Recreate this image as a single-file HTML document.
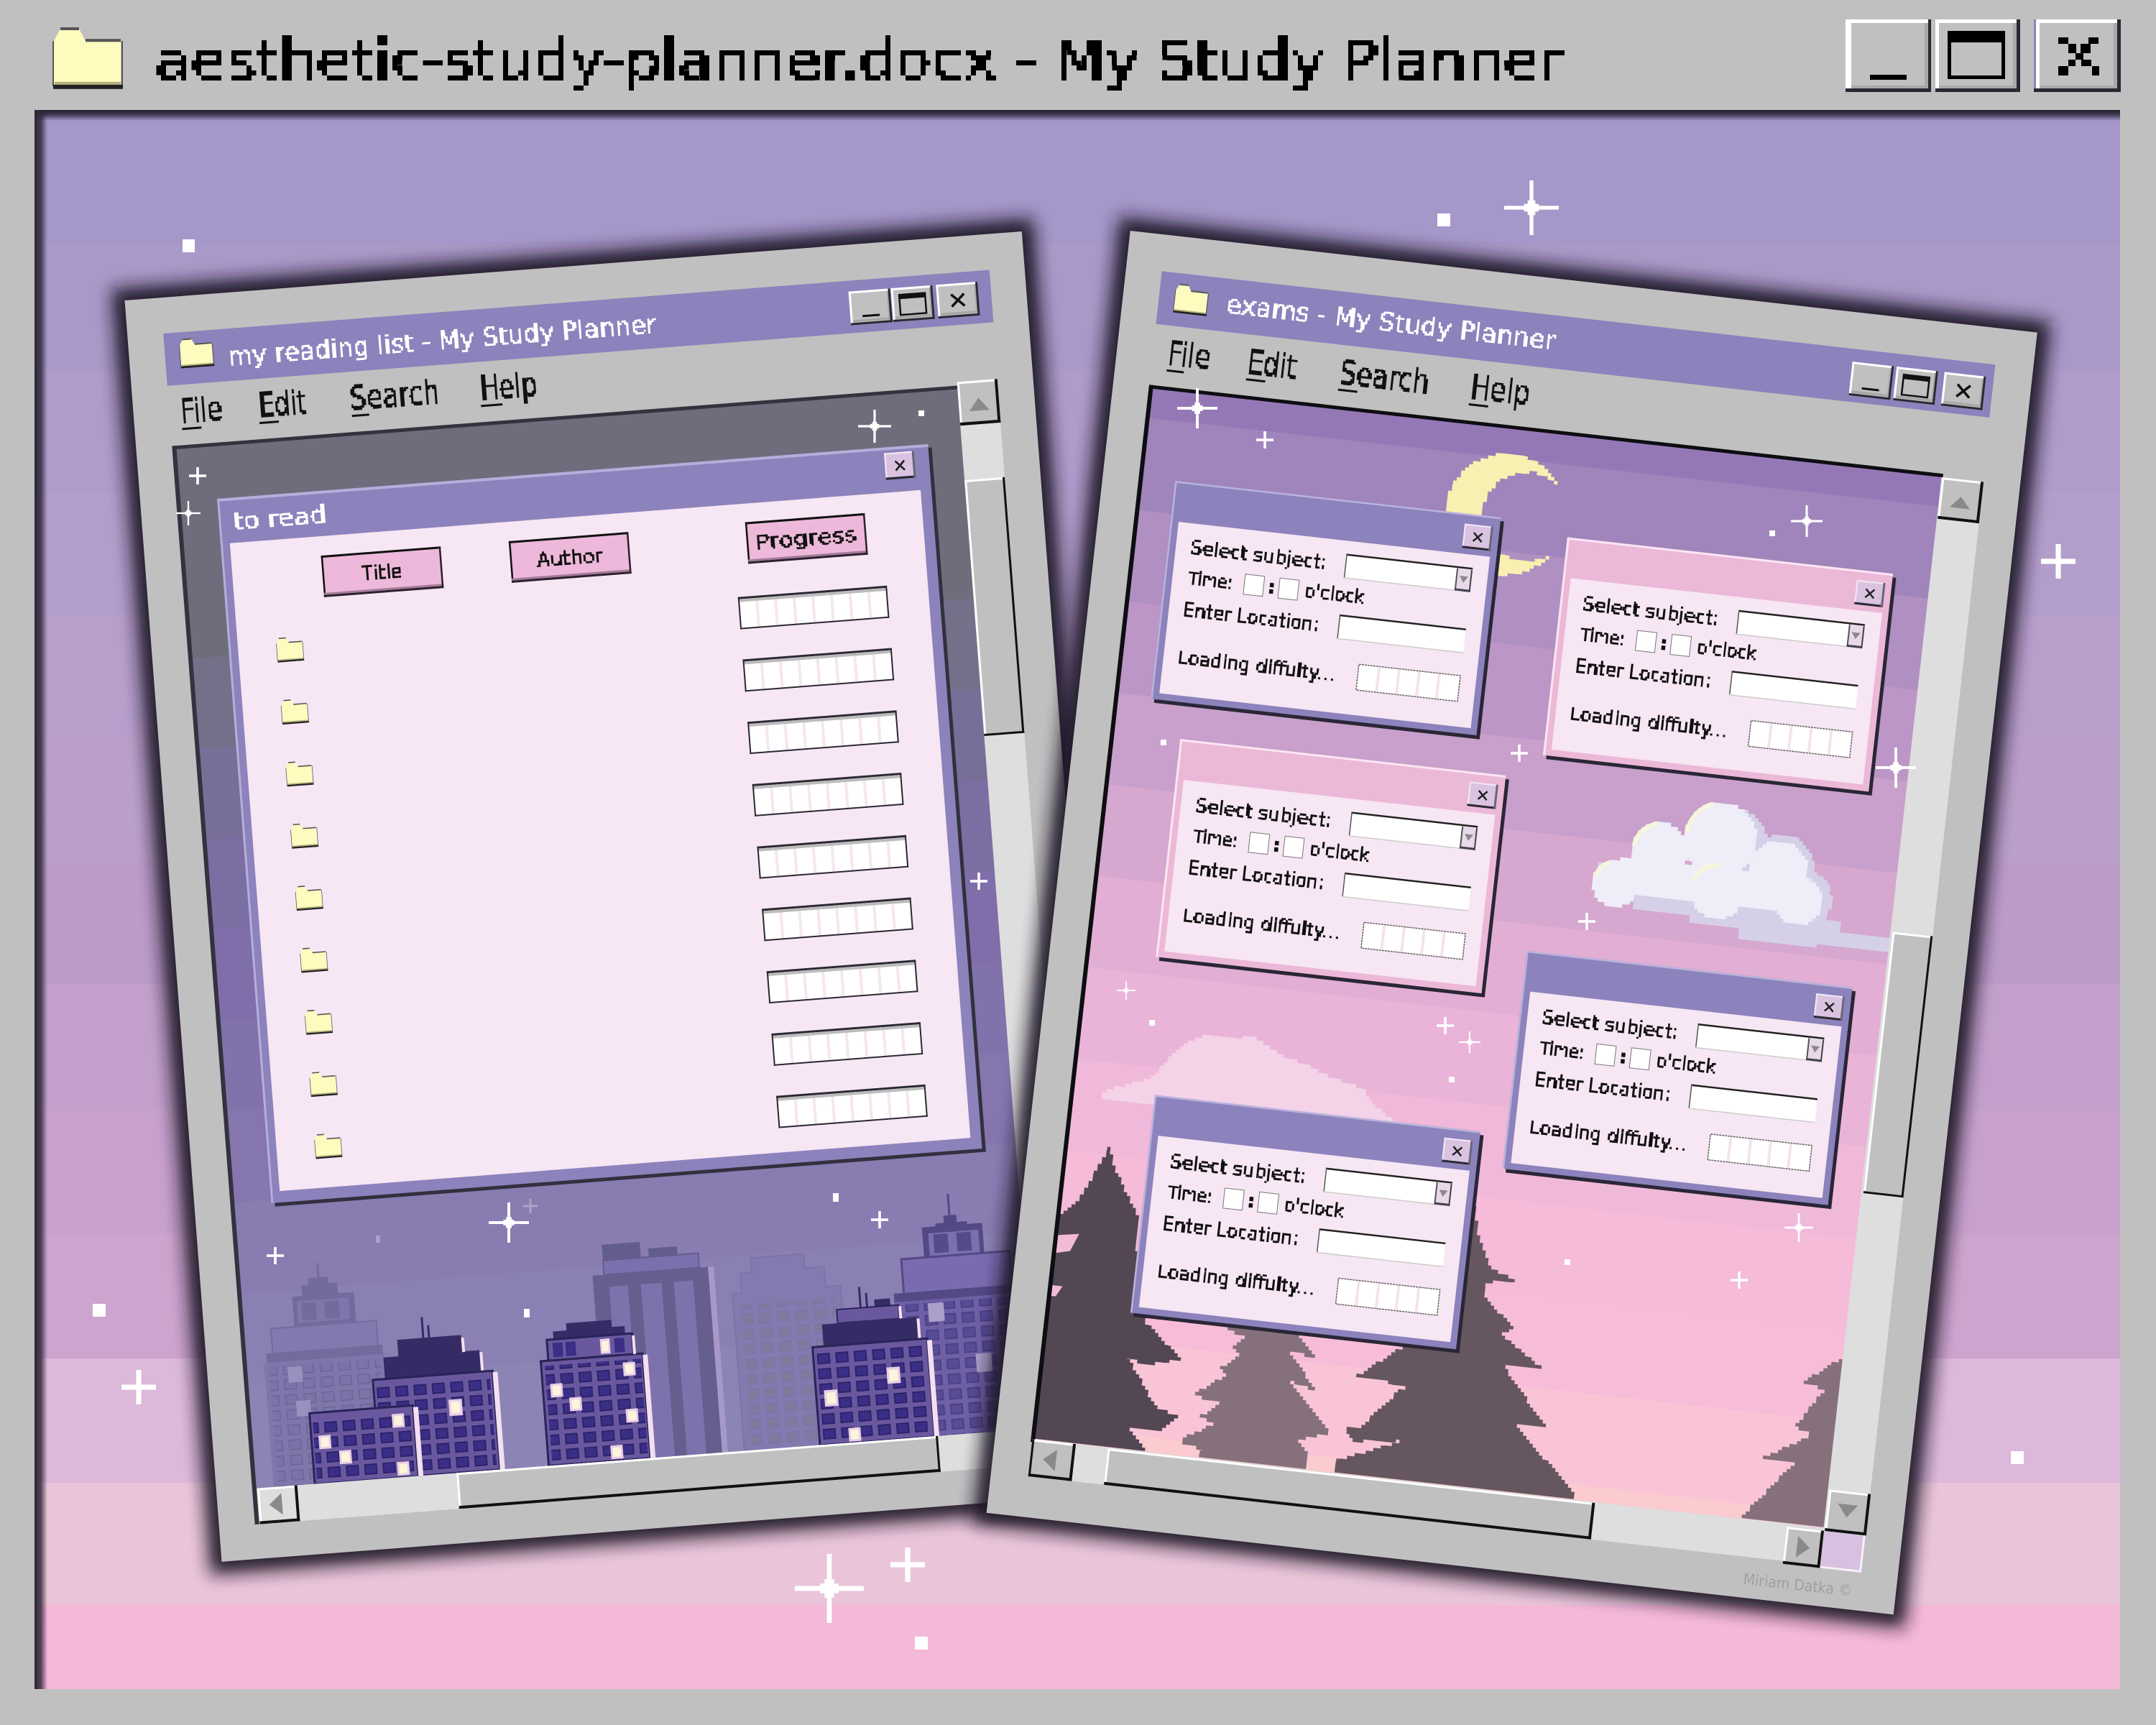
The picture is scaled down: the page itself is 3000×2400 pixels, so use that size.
<!DOCTYPE html>
<html lang="en"><head><meta charset="utf-8"><title>aesthetic-study-planner.docx - My Study Planner</title>
<style>html,body{margin:0;padding:0;background:#c0c0c0}svg{display:block}text{font-family:"DejaVu Sans","Liberation Sans",sans-serif}</style></head>
<body>
<svg xmlns="http://www.w3.org/2000/svg" width="3000" height="2400" viewBox="0 0 3000 2400">
<defs>
<filter id="sh" x="-10%" y="-10%" width="120%" height="120%"><feGaussianBlur stdDeviation="12"/></filter>
<filter id="pt" filterUnits="userSpaceOnUse" x="0" y="0" width="2300" height="150" color-interpolation-filters="sRGB"><feFlood x="3" y="3" width="1" height="1"/><feComposite width="7" height="7"/><feTile result="a"/><feComposite in="SourceGraphic" in2="a" operator="in"/><feComponentTransfer><feFuncA type="discrete" tableValues="0 1"/></feComponentTransfer><feMorphology operator="dilate" radius="3"/></filter>
<filter id="p3" filterUnits="userSpaceOnUse" x="0" y="0" width="1300" height="1800" color-interpolation-filters="sRGB"><feFlood x="1" y="1" width="1" height="1"/><feComposite width="3" height="3"/><feTile result="a"/><feComposite in="SourceGraphic" in2="a" operator="in"/><feComponentTransfer><feFuncA type="discrete" tableValues="0 1"/></feComponentTransfer><feMorphology operator="dilate" radius="1"/></filter>
<filter id="d3" filterUnits="userSpaceOnUse" x="0" y="0" width="470" height="320" color-interpolation-filters="sRGB"><feFlood x="1" y="1" width="1" height="1"/><feComposite width="3" height="3"/><feTile result="a"/><feComposite in="SourceGraphic" in2="a" operator="in"/><feComponentTransfer><feFuncA type="discrete" tableValues="0 1"/></feComponentTransfer><feMorphology operator="dilate" radius="1"/></filter>
<filter id="p5" filterUnits="userSpaceOnUse" x="0" y="0" width="1300" height="1800" color-interpolation-filters="sRGB"><feFlood x="2" y="2" width="1" height="1"/><feComposite width="5" height="5"/><feTile result="a"/><feComposite in="SourceGraphic" in2="a" operator="in"/><feComponentTransfer><feFuncA type="discrete" tableValues="0 1"/></feComponentTransfer><feMorphology operator="dilate" radius="2"/></filter>
<linearGradient id="gt" x1="0" y1="0" x2="0" y2="1"><stop offset="0" stop-color="#231e2e"/><stop offset=".45" stop-color="#231e2e" stop-opacity=".75"/><stop offset="1" stop-color="#231e2e" stop-opacity="0"/></linearGradient>
<linearGradient id="gl" x1="0" y1="0" x2="1" y2="0"><stop offset="0" stop-color="#2c2636"/><stop offset=".5" stop-color="#2c2636" stop-opacity=".8"/><stop offset="1" stop-color="#2c2636" stop-opacity="0"/></linearGradient>
<g id="S"><rect x="-1" y="-.07" width="2" height=".14" fill="#fff"/><rect x="-.07" y="-1" width=".14" height="2" fill="#fff"/><rect x="-.27" y="-.14" width=".54" height=".28" fill="#fff"/><rect x="-.14" y="-.27" width=".28" height=".54" fill="#fff"/></g>
<g id="P"><rect x="-1" y="-.15" width="2" height=".3" fill="#fff"/><rect x="-.15" y="-1" width=".3" height="2" fill="#fff"/></g>
<g id="F"><path d="M3 18 L12 1 H38 L47 18 H96 V78 H3Z" fill="#fdfbbd"/><path d="M12 1H38M47 17H96" stroke="#555" stroke-width="4" fill="none"/><path d="M2 18V80M98 18V80" stroke="#555" stroke-width="2"/><rect x="2" y="78" width="97" height="6" fill="#222"/><rect x="4" y="74" width="92" height="4" fill="#b5b27c"/></g>
<g id="wb"><rect width="58" height="47" fill="#c0c0c0"/><path d="M3 40H53V3h2V43H3Z" fill="#a6a6a6"/><rect width="58" height="3" fill="#fff"/><rect width="3" height="47" fill="#fff"/><rect y="44" width="58" height="3" fill="#2a2833"/><rect x="55" width="3" height="47" fill="#2a2833"/></g>
<g id="wbi"><use href="#wb"/><rect x="17" y="34" width="24" height="3" fill="#111"/></g>
<g id="wba"><use href="#wb"/><rect x="11" y="10" width="36" height="28" fill="none" stroke="#111" stroke-width="2.500"/><rect x="10" y="9" width="38" height="7" fill="#111"/></g>
<g id="wbx"><use href="#wb"/><path d="M20 15 L38 32M38 15 L20 32" stroke="#111" stroke-width="3.500"/></g>
<g id="sb"><rect width="58" height="58" fill="#c0c0c0"/><rect width="58" height="3" fill="#fff"/><rect width="3" height="58" fill="#fff"/><rect y="54" width="58" height="4" fill="#111"/><rect x="54" width="4" height="58" fill="#111"/></g>
<g id="xb"><rect width="40" height="34" fill="#d9c3e0"/><rect width="40" height="2" fill="#f3e8f5"/><rect width="2" height="34" fill="#f3e8f5"/><rect y="31" width="40" height="3" fill="#2a2833"/><rect x="37" width="3" height="34" fill="#6a6478"/><path d="M14 11 L26 23M26 11 L14 23" stroke="#222" stroke-width="2.500"/></g>
<g id="pb"><rect width="208" height="45" fill="#fff"/><path d="M26 3V44M52 3V44M78 3V44M104 3V44M130 3V44M156 3V44M182 3V44" stroke="#f5e6f2" stroke-width="4"/><rect width="208" height="3" fill="#2a2833"/><rect y="3" width="208" height="4" fill="#bbb"/><rect width="2" height="45" fill="#2a2833"/><rect x="206" width="2" height="45" fill="#2a2833"/><rect y="43" width="208" height="2" fill="#2a2833"/></g>
<g id="hb"><rect width="167" height="58" fill="#edb8d9"/><rect width="167" height="3" fill="#111"/><rect width="2.500" height="58" fill="#111"/><rect y="52" width="167" height="3" fill="#a57a98"/><rect y="55" width="167" height="3" fill="#2a2230"/><rect x="164.500" width="2.500" height="58" fill="#2a2230"/></g>
<g id="db">
<rect x="11" y="56" width="436" height="240" fill="#f7e6f3"/>
<use href="#xb" transform="translate(407,14)"/>
<rect x="248" y="74" width="177" height="34" fill="#fff"/><rect x="248" y="74" width="177" height="2.500" fill="#222"/><rect x="248" y="74" width="1.500" height="34" fill="#555"/><rect x="248" y="107" width="177" height="1.500" fill="#ccc"/>
<rect x="403" y="77" width="22" height="31" fill="#e9d7ea"/><rect x="403" y="77" width="2" height="31" fill="#555"/><rect x="403" y="105" width="22" height="3" fill="#44404f"/><rect x="423" y="77" width="2" height="31" fill="#44404f"/><path d="M408 87H420L414 96Z" fill="#8a8a8a"/>
<rect x="111.500" y="118" width="27" height="28" fill="#fff" stroke="#777" stroke-width="1"/><rect x="160" y="118" width="27" height="28" fill="#fff" stroke="#777" stroke-width="1"/>
<rect x="248" y="159" width="177" height="34" fill="#fff"/><rect x="248" y="159" width="177" height="2.500" fill="#222"/><rect x="248" y="159" width="1.500" height="34" fill="#555"/><rect x="248" y="192" width="177" height="1.500" fill="#ccc"/>
<rect x="282.500" y="225" width="142" height="36" fill="#fff" stroke="#666" stroke-width="1.500" stroke-dasharray="3 1"/><path d="M311 226V260M339 226V260M367 226V260M395 226V260" stroke="#f3e3f0" stroke-width="4"/>
</g>
<g id="dp"><rect x="5" y="5" width="456" height="305" fill="#2a2636"/><rect width="456" height="305" fill="#8c82bc"/><rect width="456" height="2.500" fill="#b9b3dd"/><rect width="2.500" height="305" fill="#b9b3dd"/><use href="#db"/></g>
<g id="dk"><rect x="5" y="5" width="456" height="305" fill="#2a2636"/><rect width="456" height="305" fill="#ecb8d8"/><rect width="456" height="3" fill="#fbe6f2"/><rect width="3" height="305" fill="#fbe6f2"/><use href="#db"/></g>
<pattern id="w1" width="25.600" height="21" patternUnits="userSpaceOnUse"><rect x="4" y="3" width="16" height="13" fill="#3b2e87" stroke="#2b2368" stroke-width="2"/></pattern>
<pattern id="w2" width="25.600" height="21" patternUnits="userSpaceOnUse"><rect x="4" y="3" width="16" height="13" fill="#7c74a8" stroke="#6f6899" stroke-width="2"/></pattern>
<pattern id="w3" width="25.600" height="21" patternUnits="userSpaceOnUse"><rect x="4" y="3" width="16" height="13" fill="#82799f" stroke="#7c74a9" stroke-width="1.500"/></pattern>
<pattern id="w4" width="25.600" height="21" patternUnits="userSpaceOnUse"><rect x="4" y="3" width="16" height="13" fill="#584c96" stroke="#4a4086" stroke-width="2"/></pattern>
<g id="lit"><rect x="-7" y="-8" width="14" height="16" fill="#fdf4dc" stroke="#e9cfe6" stroke-width="3"/></g>
<clipPath id="cl"><rect x="52" y="210" width="1094" height="1452"/></clipPath>
<clipPath id="cr"><rect x="55" y="214" width="1107" height="1472"/></clipPath>
</defs>

<rect width="3000" height="2400" fill="#c0c0c0"/>

<!-- outer bands -->
<rect x="48" y="153" width="2902" height="2197" fill="#a597c9"/>
<rect x="48" y="340" width="2902" height="180" fill="#a999c8"/>
<rect x="48" y="514" width="2902" height="180" fill="#b09bca"/>
<rect x="48" y="686" width="2902" height="175" fill="#b39dcb"/>
<rect x="48" y="855" width="2902" height="175" fill="#b79ecb"/>
<rect x="48" y="1024" width="2902" height="180" fill="#b99fc9"/>
<rect x="48" y="1200" width="2902" height="175" fill="#bb9bc8"/>
<rect x="48" y="1369" width="2902" height="180" fill="#c2a0cb"/>
<rect x="48" y="1545" width="2902" height="175" fill="#c7a1cc"/>
<rect x="48" y="1717" width="2902" height="175" fill="#cca4cd"/>
<rect x="48" y="1890" width="2902" height="175" fill="#dcb8da"/>
<rect x="48" y="2063" width="2902" height="172" fill="#eac5da"/>
<rect x="48" y="2233" width="2902" height="117" fill="#f4b8d8"/>
<rect x="48" y="153" width="2902" height="15" fill="url(#gt)"/>
<rect x="48" y="153" width="18" height="2197" fill="url(#gl)"/>

<!-- top chrome -->
<use href="#F" transform="translate(72,39) scale(1,1.010)"/>
<g filter="url(#pt)"><text x="216" y="110" font-size="76" fill="#000" stroke="#000" stroke-width="1" textLength="1959" lengthAdjust="spacingAndGlyphs">aesthetic-study-planner.docx - My Study Planner</text></g>
<g>
<rect x="2568" y="27" width="119" height="101" fill="#2a2833"/><rect x="2568" y="27" width="115" height="96" fill="#fff"/><rect x="2576" y="32" width="107" height="91" fill="#a8a8a8"/><rect x="2576" y="32" width="102" height="87" fill="#c0c0c0"/><rect x="2602" y="104" width="51" height="7" fill="#000"/>
<rect x="2693" y="27" width="118" height="101" fill="#2a2833"/><rect x="2693" y="27" width="113" height="96" fill="#fff"/><rect x="2698" y="32" width="108" height="91" fill="#a8a8a8"/><rect x="2698" y="32" width="103" height="87" fill="#c0c0c0"/><rect x="2710" y="43" width="80" height="67" fill="#000"/><rect x="2715" y="59" width="70" height="46" fill="#c0c0c0"/>
<rect x="2830" y="27" width="121" height="101" fill="#2a2833"/><rect x="2830" y="27" width="116" height="96" fill="#fff"/><rect x="2830" y="27" width="3" height="96" fill="#8c82bc"/><rect x="2838" y="32" width="108" height="91" fill="#a8a8a8"/><rect x="2838" y="32" width="103" height="87" fill="#c0c0c0"/>
<path d="M2864 52h14v9h-14zM2906 52h14v9h-14zM2878 61h11v13h-11zM2895 61h14v13h-14zM2888 74h11v9h-11zM2878 83h10v9h-10zM2896 83h14v9h-14zM2864 92h14v13h-14zM2911 92h10v13h-10z" fill="#000"/>
</g>

<!-- LEFT WINDOW -->
<g transform="translate(173.500,418) rotate(-4.400)">
<rect x="-17" y="-17" width="1286" height="1794" fill="#1c1728" opacity=".97" filter="url(#sh)"/>
<rect width="1252" height="1760" fill="#c0c0c0"/>
<rect x="50" y="50" width="1153" height="73" fill="#8c82bc"/>
<use href="#F" transform="translate(70,60) scale(.48)"/>
<use href="#wbi" transform="translate(1005,65)"/><use href="#wba" transform="translate(1064,65)"/><use href="#wbx" transform="translate(1127,65)"/>

<!-- client -->
<g clip-path="url(#cl)">
<rect x="52" y="210" width="1094" height="300" fill="#6e6d7b"/>
<rect x="52" y="504" width="1094" height="130" fill="#74708a"/>
<rect x="52" y="630" width="1094" height="130" fill="#776f97"/>
<rect x="52" y="757" width="1094" height="130" fill="#7b6ea3"/>
<rect x="52" y="883" width="1094" height="130" fill="#7f6ea9"/>
<rect x="52" y="1010" width="1094" height="130" fill="#8272ab"/>
<rect x="52" y="1136" width="1094" height="130" fill="#8576ae"/>
<rect x="52" y="1263" width="1094" height="130" fill="#887cb1"/>
<rect x="52" y="1390" width="1094" height="130" fill="#8a80b3"/>
<rect x="52" y="1516" width="1094" height="146" fill="#8d84b6"/>
<!-- F faint building -->
<path d="M766 1395H840V1415H867V1443H888V1662H737V1443H750V1415H766Z" fill="#837aaf" stroke="#7c74a9" stroke-width="2"/>
<rect x="748" y="1460" width="130" height="195" fill="url(#w3)"/>
<!-- A faded building -->
<path d="M163 1356h3v20h-3zM150 1376H178V1385H190V1400H212V1442H126V1400H140V1385H150Z" fill="#726b9d"/>
<rect x="132" y="1407" width="72" height="30" fill="#7f77ab"/><rect x="138" y="1410" width="20" height="24" fill="#726b9d"/><rect x="170" y="1410" width="20" height="24" fill="#726b9d"/>
<rect x="93" y="1442" width="147" height="38" fill="#817aae" stroke="#726b9d" stroke-width="2"/>
<rect x="84" y="1476" width="162" height="14" fill="#726b9d"/>
<rect x="80" y="1489" width="168" height="173" fill="#7f77ab"/><rect x="86" y="1495" width="156" height="167" fill="url(#w2)"/>
<rect x="112" y="1497" width="20" height="22" fill="#9890bf"/><rect x="120" y="1545" width="20" height="22" fill="#9890bf"/>
<!-- E tall -->
<path d="M575 1361H614V1383H561V1361ZM625 1371H665V1383H625Z" fill="#635d8e"/>
<rect x="561" y="1383" width="133" height="20" fill="#7b70ad" stroke="#635d8e" stroke-width="2"/>
<rect x="545" y="1403" width="168" height="259" fill="#655e8f"/>
<rect x="567" y="1420" width="26" height="242" fill="#7e72ac"/><rect x="611" y="1420" width="29" height="242" fill="#7e72ac"/><rect x="657" y="1420" width="27" height="242" fill="#7e72ac"/><rect x="706" y="1403" width="8" height="259" fill="#a699c8"/>
<!-- H right -->
<rect x="1045" y="1327" width="3" height="30" fill="#534984"/>
<path d="M1038 1357H1056V1367H1070V1371H1091V1413H1007V1371H1026V1367H1038Z" fill="#534984"/>
<rect x="1015" y="1380" width="70" height="32" fill="#7b6fb0"/><rect x="1022" y="1382" width="20" height="26" fill="#554a8a"/><rect x="1054" y="1382" width="20" height="26" fill="#554a8a"/>
<rect x="975" y="1413" width="151" height="51" fill="#7a6bb0" stroke="#534984" stroke-width="3"/>
<rect x="961" y="1460" width="185" height="202" fill="#6f60a6"/><rect x="961" y="1460" width="185" height="12" fill="#534984"/><rect x="968" y="1476" width="178" height="186" fill="url(#w4)"/>
<rect x="1007" y="1477" width="22" height="26" fill="#a99fc8"/><rect x="1068" y="1552" width="22" height="26" fill="#a99fc8"/>
<!-- B -->
<rect x="302" y="1442" width="3" height="32" fill="#352c66"/><rect x="310" y="1454" width="3" height="20" fill="#352c66"/>
<path d="M267 1471H356V1494H380V1524H246V1494H267Z" fill="#352c66"/><rect x="356" y="1475" width="4" height="20" fill="#f3dff0"/><rect x="380" y="1497" width="4" height="27" fill="#f3dff0"/>
<rect x="229" y="1524" width="167" height="138" fill="#6a589f" stroke="#2a2358" stroke-width="3"/><rect x="232" y="1532" width="160" height="130" fill="url(#w1)"/><rect x="396" y="1526" width="7" height="136" fill="#f3dff0"/>
<use href="#lit" transform="translate(341,1571) scale(1.100,1.200)"/>
<!-- C -->
<rect x="137.500" y="1563.500" width="144.500" height="99" fill="#6a589f" stroke="#2a2358" stroke-width="3"/><rect x="141" y="1572" width="138" height="90" fill="url(#w1)"/><rect x="282" y="1566" width="7" height="96" fill="#f3dff0"/>
<use href="#lit" transform="translate(260,1583)"/><use href="#lit" transform="translate(156,1605)"/><use href="#lit" transform="translate(183,1628)"/><use href="#lit" transform="translate(262,1650)"/>
<!-- D -->
<path d="M503 1466H566V1476H584V1487H484V1476H503Z" fill="#352c66"/>
<rect x="474.600" y="1487" width="119" height="29" fill="#6a589f" stroke="#2a2358" stroke-width="3"/><rect x="482" y="1492" width="14" height="20" fill="#3b2e87"/><rect x="500" y="1492" width="14" height="20" fill="#3b2e87"/><rect x="568" y="1492" width="14" height="20" fill="#3b2e87"/>
<rect x="464" y="1516" width="142" height="146" fill="#6a589f" stroke="#2a2358" stroke-width="3"/><rect x="469" y="1523" width="134" height="139" fill="url(#w1)"/><rect x="606" y="1518" width="7" height="144" fill="#f3dff0"/><rect x="593" y="1490" width="4" height="26" fill="#f3dff0"/>
<use href="#lit" transform="translate(586,1536)"/><use href="#lit" transform="translate(483,1558)"/><use href="#lit" transform="translate(508,1579)"/><use href="#lit" transform="translate(585,1601)"/><use href="#lit" transform="translate(555,1502) scale(.8,1.100)"/><use href="#lit" transform="translate(560,1650)"/>
<!-- G -->
<rect x="912" y="1447" width="3" height="28" fill="#352c66"/><rect x="921" y="1456" width="3" height="20" fill="#352c66"/><rect x="933" y="1466" width="22" height="12" fill="#352c66"/>
<rect x="880" y="1476" width="86" height="19" fill="#6a589f" stroke="#2a2358" stroke-width="2"/>
<rect x="858" y="1495" width="132" height="31" fill="#352c66"/><rect x="966" y="1478" width="4" height="17" fill="#f3dff0"/><rect x="990" y="1497" width="4" height="30" fill="#f3dff0"/>
<rect x="842.500" y="1525.600" width="160" height="137" fill="#6a589f" stroke="#2a2358" stroke-width="3"/><rect x="847" y="1533" width="153" height="129" fill="url(#w1)"/><rect x="1002" y="1528" width="7" height="134" fill="#f3dff0"/>
<use href="#lit" transform="translate(952,1573) scale(1.100,1.200)"/><use href="#lit" transform="translate(863,1598) scale(1.100,1.200)"/><use href="#lit" transform="translate(892,1651)"/>
</g>
<rect x="52" y="207" width="1094" height="5" fill="#33323e"/><rect x="50" y="207" width="6" height="1505" fill="#33323e"/>

<!-- dialog to read -->
<rect x="112" y="290" width="992" height="983" fill="#33303e"/>
<rect x="107" y="285" width="992" height="983" fill="#8c82bc"/>
<rect x="107" y="285" width="992" height="4" fill="#b5aedb"/><rect x="107" y="285" width="3" height="983" fill="#b5aedb"/>
<rect x="120" y="348" width="964" height="904" fill="#f7e6f3"/>
<use href="#xb" transform="translate(1037,293) scale(1.050,1.100)"/>
<use href="#hb" transform="translate(245,375)"/><use href="#hb" transform="translate(507,375)"/><use href="#hb" transform="translate(837,374)"/>
<use href="#F" transform="translate(173,485) scale(.38,.40)"/>
<use href="#F" transform="translate(173,571.600) scale(.38,.40)"/><use href="#F" transform="translate(173,658.200) scale(.38,.40)"/><use href="#F" transform="translate(173,744.800) scale(.38,.40)"/><use href="#F" transform="translate(173,831.400) scale(.38,.40)"/><use href="#F" transform="translate(173,918) scale(.38,.40)"/><use href="#F" transform="translate(173,1004.600) scale(.38,.40)"/><use href="#F" transform="translate(173,1091.200) scale(.38,.40)"/><use href="#F" transform="translate(173,1177.800) scale(.38,.40)"/>
<use href="#pb" transform="translate(819,477)"/><use href="#pb" transform="translate(819,564)"/><use href="#pb" transform="translate(819,651)"/><use href="#pb" transform="translate(819,738)"/><use href="#pb" transform="translate(819,825)"/><use href="#pb" transform="translate(819,912)"/><use href="#pb" transform="translate(819,999)"/><use href="#pb" transform="translate(819,1086)"/><use href="#pb" transform="translate(819,1173)"/>

<!-- left window text -->
<g filter="url(#p3)" stroke-width=".3">
<text x="137" y="101" font-size="34" fill="#fff" stroke="#fff" textLength="598" lengthAdjust="spacingAndGlyphs">my reading list - My Study Planner</text>
<text x="127" y="330" font-size="34" fill="#fff" stroke="#fff" textLength="130" lengthAdjust="spacingAndGlyphs">to read</text>
<text x="328" y="414" text-anchor="middle" font-size="28" fill="#111" stroke="#111" textLength="57" lengthAdjust="spacingAndGlyphs">Title</text>
<text x="590" y="414" text-anchor="middle" font-size="28" fill="#111" stroke="#111" textLength="92" lengthAdjust="spacingAndGlyphs">Author</text>
<text x="920" y="412" text-anchor="middle" font-size="28" fill="#111" stroke="#111" textLength="141" lengthAdjust="spacingAndGlyphs">Progress</text>
<g fill="#111" stroke="#111" stroke-width=".4">
<text x="66" y="176" font-size="46" textLength="58" lengthAdjust="spacingAndGlyphs">File</text><rect x="66" y="182" width="26" height="3"/>
<text x="175" y="176" font-size="46" textLength="66" lengthAdjust="spacingAndGlyphs">Edit</text><rect x="175" y="182" width="26" height="3"/>
<text x="302" y="176" font-size="46" textLength="125" lengthAdjust="spacingAndGlyphs">Search</text><rect x="302" y="182" width="26" height="3"/>
<text x="484" y="176" font-size="46" textLength="79" lengthAdjust="spacingAndGlyphs">Help</text><rect x="484" y="182" width="28" height="3"/>
</g>
</g>

<!-- scrollbars -->
<rect x="1146" y="202" width="56" height="1465" fill="#dedede"/>
<use href="#sb" transform="translate(1146,202) scale(.97,1.050)"/><path d="M1160 244H1188L1174 226Z" fill="#8a8a8a"/>
<rect x="1146" y="339" width="56" height="357" fill="#c0c0c0"/><rect x="1146" y="339" width="3" height="357" fill="#fff"/><rect x="1146" y="339" width="56" height="3" fill="#fff"/><rect x="1199" y="339" width="3" height="357" fill="#111"/><rect x="1146" y="693" width="56" height="3" fill="#111"/>
<rect x="110" y="1662" width="1092" height="50" fill="#dedede"/>
<rect x="57" y="1662" width="56" height="50" fill="#dedede"/><rect x="57" y="1662" width="3" height="50" fill="#fff"/><rect x="57" y="1662" width="56" height="3" fill="#fff"/><rect x="57" y="1708" width="56" height="4" fill="#111"/><rect x="109" y="1662" width="4" height="50" fill="#111"/><path d="M90 1671V1701L72 1686Z" fill="#8a8a8a"/>
<rect x="335" y="1662" width="672" height="50" fill="#c0c0c0"/><rect x="335" y="1662" width="672" height="3" fill="#fff"/><rect x="335" y="1662" width="3" height="50" fill="#fff"/><rect x="335" y="1708" width="672" height="4" fill="#111"/><rect x="1004" y="1662" width="3" height="50" fill="#111"/>
</g>

<!-- RIGHT WINDOW -->
<g transform="translate(1572.700,321) rotate(6.400)">
<rect x="-17" y="-17" width="1304" height="1829" fill="#1c1728" opacity=".97" filter="url(#sh)"/>
<rect width="1270" height="1795" fill="#c0c0c0"/>
<rect x="50" y="51" width="1167" height="74" fill="#8c82bc"/>
<use href="#F" transform="translate(71,66) scale(.48)"/>
<use href="#wbi" transform="translate(1019,69)"/><use href="#wba" transform="translate(1081,69)"/><use href="#wbx" transform="translate(1148,69)"/>

<g clip-path="url(#cr)">
<rect x="55" y="214" width="1107" height="50" fill="#9478b6"/>
<rect x="55" y="256" width="1107" height="132" fill="#a085bc"/>
<rect x="55" y="385" width="1107" height="132" fill="#b08fc2"/>
<rect x="55" y="513" width="1107" height="132" fill="#bc96c6"/>
<rect x="55" y="641" width="1107" height="132" fill="#c8a0cb"/>
<rect x="55" y="769" width="1107" height="132" fill="#d6a7cf"/>
<rect x="55" y="897" width="1107" height="132" fill="#e2aed4"/>
<rect x="55" y="1025" width="1107" height="132" fill="#e9b4d7"/>
<rect x="55" y="1153" width="1107" height="132" fill="#f0b8d9"/>
<rect x="55" y="1281" width="1107" height="132" fill="#f5bbd9"/>
<rect x="55" y="1409" width="1107" height="132" fill="#f7bdd8"/>
<rect x="55" y="1537" width="1107" height="132" fill="#f9c5d6"/>
<rect x="55" y="1665" width="1107" height="21" fill="#fbcbd0"/>
<g filter="url(#p5)">
<!-- moon -->
<path d="M632 286A84 84 0 1 0 632 382A62 62 0 1 1 632 286Z" fill="#f7f0b0"/>
<!-- far cloud -->
<polygon points="96,1194 130,1180 161,1168 195,1120 230,1100 300,1097 340,1118 370,1125 410,1140 455,1150 471,1169 503,1190 503,1205 96,1205" fill="#f4d2e8"/>
<!-- cloud -->
<path d="M745 848H800V860H880V870H950V885H1060V880H1162V862H1090V845H1060V800H745Z" fill="#d5d0e8"/>
<circle cx="1000" cy="778" r="44" fill="#d5d0e8"/><circle cx="1034" cy="820" r="40" fill="#d5d0e8"/><circle cx="925" cy="755" r="52" fill="#d5d0e8"/>
<circle cx="829" cy="775" r="39" fill="#eeedf8"/><circle cx="911" cy="750" r="51" fill="#eeedf8"/><circle cx="772" cy="828" r="32" fill="#eeedf8"/><circle cx="915" cy="822" r="38" fill="#eeedf8"/><circle cx="996" cy="783" r="40" fill="#eeedf8"/><circle cx="1027" cy="823" r="34" fill="#eeedf8"/><rect x="775" y="790" width="250" height="50" fill="#eeedf8"/>
</g>
<path d="M792 772A38 38 0 0 1 822 738M863 745A50 50 0 0 1 895 702M743 822A29 29 0 0 1 762 799M880 812A34 34 0 0 1 915 786" stroke="#f7f6dc" stroke-width="6" fill="none"/>
<!-- trees -->
<g filter="url(#p5)">
<polygon points="1158,1449 1109,1488 1140,1495 1105,1550 1130,1560 1061,1601 1110,1600 1043,1686 1158,1686" fill="#85707c"/>
<polygon points="304,1506 334,1510 314,1527 328,1536 301,1559 311,1567 270,1598 286,1605 313,1603 280,1629 303,1636 253,1666 290,1675 280,1686 437,1686 437,1665 419,1646 462,1632 396,1564 438,1576 391,1523 430,1530 405,1504 380,1480 330,1480" fill="#85707c"/>
<polygon points="620,1280 627,1292 638,1338 660,1378 694,1392 652,1399 654,1418 699,1457 684,1469 745,1509 689,1508 761,1591 716,1591 770,1640 811,1680 811,1686 477,1686 477,1668 565,1631 497,1639 483,1622 503,1620 551,1563 566,1554 489,1550 549,1502 570,1440 590,1400" fill="#65565f"/>
<polygon points="113,1271 125,1300 163,1362 170,1440 188,1505 245,1552 195,1567 171,1557 217,1622 249,1632 225,1655 183,1653 210,1686 55,1686 55,1372 78,1350 90,1325" fill="#534753"/>
</g>
<path d="M55 1400L85 1395 75 1420 55 1425Z" fill="#f3bcd6"/><path d="M55 1470H70L62 1485H55Z" fill="#f3bcd6"/>
</g>
<rect x="52" y="210" width="1110" height="5" fill="#0d0d12"/><rect x="50" y="210" width="6" height="1480" fill="#0d0d12"/>

<!-- dialogs -->
<g transform="translate(101,339)"><use href="#dp"/><g filter="url(#d3)" fill="#111" stroke="#111" stroke-width=".3" font-size="26">
<text x="31.500" y="98" textLength="191" lengthAdjust="spacingAndGlyphs">Select subject:</text><text x="33" y="141" textLength="62" lengthAdjust="spacingAndGlyphs">Time:</text><text x="144" y="141" font-weight="bold">:</text><text x="196" y="140" textLength="84" lengthAdjust="spacingAndGlyphs">o'clock</text><text x="31.500" y="185" textLength="190" lengthAdjust="spacingAndGlyphs">Enter Location:</text><text x="31.500" y="252" textLength="219" lengthAdjust="spacingAndGlyphs">Loading diffulty...</text></g></g>
<g transform="translate(652,356)"><use href="#dk"/><g filter="url(#d3)" fill="#111" stroke="#111" stroke-width=".3" font-size="26">
<text x="31.500" y="98" textLength="191" lengthAdjust="spacingAndGlyphs">Select subject:</text><text x="33" y="141" textLength="62" lengthAdjust="spacingAndGlyphs">Time:</text><text x="144" y="141" font-weight="bold">:</text><text x="196" y="140" textLength="84" lengthAdjust="spacingAndGlyphs">o'clock</text><text x="31.500" y="185" textLength="190" lengthAdjust="spacingAndGlyphs">Enter Location:</text><text x="31.500" y="252" textLength="219" lengthAdjust="spacingAndGlyphs">Loading diffulty...</text></g></g>
<g transform="translate(148,695)"><use href="#dk"/><g filter="url(#d3)" fill="#111" stroke="#111" stroke-width=".3" font-size="26">
<text x="31.500" y="98" textLength="191" lengthAdjust="spacingAndGlyphs">Select subject:</text><text x="33" y="141" textLength="62" lengthAdjust="spacingAndGlyphs">Time:</text><text x="144" y="141" font-weight="bold">:</text><text x="196" y="140" textLength="84" lengthAdjust="spacingAndGlyphs">o'clock</text><text x="31.500" y="185" textLength="190" lengthAdjust="spacingAndGlyphs">Enter Location:</text><text x="31.500" y="252" textLength="219" lengthAdjust="spacingAndGlyphs">Loading diffulty...</text></g></g>
<g transform="translate(660,934)"><use href="#dp"/><g filter="url(#d3)" fill="#111" stroke="#111" stroke-width=".3" font-size="26">
<text x="31.500" y="98" textLength="191" lengthAdjust="spacingAndGlyphs">Select subject:</text><text x="33" y="141" textLength="62" lengthAdjust="spacingAndGlyphs">Time:</text><text x="144" y="141" font-weight="bold">:</text><text x="196" y="140" textLength="84" lengthAdjust="spacingAndGlyphs">o'clock</text><text x="31.500" y="185" textLength="190" lengthAdjust="spacingAndGlyphs">Enter Location:</text><text x="31.500" y="252" textLength="219" lengthAdjust="spacingAndGlyphs">Loading diffulty...</text></g></g>
<g transform="translate(168,1191)"><use href="#dp"/><g filter="url(#d3)" fill="#111" stroke="#111" stroke-width=".3" font-size="26">
<text x="31.500" y="98" textLength="191" lengthAdjust="spacingAndGlyphs">Select subject:</text><text x="33" y="141" textLength="62" lengthAdjust="spacingAndGlyphs">Time:</text><text x="144" y="141" font-weight="bold">:</text><text x="196" y="140" textLength="84" lengthAdjust="spacingAndGlyphs">o'clock</text><text x="31.500" y="185" textLength="190" lengthAdjust="spacingAndGlyphs">Enter Location:</text><text x="31.500" y="252" textLength="219" lengthAdjust="spacingAndGlyphs">Loading diffulty...</text></g></g>

<!-- right window text -->
<g filter="url(#p3)"><text x="144.500" y="98" font-size="34" fill="#fff" stroke="#fff" stroke-width=".3" textLength="460" lengthAdjust="spacingAndGlyphs">exams - My Study Planner</text>
<g stroke="#111" stroke-width=".4" fill="#111">
<text x="71" y="179" font-size="46" textLength="60" lengthAdjust="spacingAndGlyphs">File</text><rect x="71" y="185" width="26" height="3"/>
<text x="183" y="179" font-size="46" textLength="68" lengthAdjust="spacingAndGlyphs">Edit</text><rect x="183" y="185" width="26" height="3"/>
<text x="312" y="179" font-size="46" textLength="125" lengthAdjust="spacingAndGlyphs">Search</text><rect x="312" y="185" width="26" height="3"/>
<text x="495" y="179" font-size="46" textLength="83" lengthAdjust="spacingAndGlyphs">Help</text><rect x="495" y="185" width="28" height="3"/>
</g></g>

<!-- scrollbars -->
<rect x="1160" y="215" width="59" height="1475" fill="#dedede"/>
<use href="#sb" transform="translate(1161,215)"/><path d="M1176 255H1204L1190 239Z" fill="#8a8a8a"/>
<rect x="1163" y="851" width="56" height="366" fill="#c0c0c0"/><rect x="1163" y="851" width="3" height="366" fill="#fff"/><rect x="1163" y="851" width="56" height="3" fill="#fff"/><rect x="1216" y="851" width="3" height="366" fill="#111"/><rect x="1163" y="1214" width="56" height="3" fill="#111"/>
<use href="#sb" transform="translate(1162,1632)"/><path d="M1176 1650H1204L1190 1668Z" fill="#8a8a8a"/>
<rect x="52" y="1686" width="1108" height="52" fill="#dedede"/>
<rect x="52" y="1686" width="61" height="52" fill="#c0c0c0"/><rect x="52" y="1686" width="61" height="3" fill="#fff"/><rect x="52" y="1686" width="3" height="52" fill="#111"/><rect x="52" y="1734" width="61" height="4" fill="#111"/><rect x="109" y="1686" width="4" height="52" fill="#111"/><path d="M88 1697V1727L70 1712Z" fill="#8a8a8a"/>
<rect x="158" y="1687" width="682" height="51" fill="#c0c0c0"/><rect x="158" y="1687" width="682" height="3" fill="#fff"/><rect x="158" y="1687" width="3" height="51" fill="#fff"/><rect x="158" y="1734" width="682" height="4" fill="#111"/><rect x="836" y="1687" width="4" height="51" fill="#111"/>
<rect x="1109" y="1690" width="52" height="52" fill="#c0c0c0"/><rect x="1109" y="1690" width="52" height="3" fill="#fff"/><rect x="1109" y="1690" width="3" height="52" fill="#fff"/><rect x="1109" y="1738" width="52" height="4" fill="#111"/><rect x="1157" y="1690" width="4" height="52" fill="#111"/><path d="M1126 1701V1731L1144 1716Z" fill="#8a8a8a"/>
<rect x="1161" y="1690" width="58" height="52" fill="#d8c0e0"/><rect x="1161" y="1739" width="58" height="3" fill="#f6eef8"/><rect x="1216" y="1690" width="3" height="52" fill="#f6eef8"/>
<text x="1057" y="1776" font-size="21" fill="#a0a0a0" textLength="152" lengthAdjust="spacingAndGlyphs">Miriam Datka ©</text>
</g>

<!-- outer sparkles -->
<use href="#S" transform="translate(2131,289) scale(38)"/>
<use href="#S" transform="translate(1154,2210) scale(48)"/>
<use href="#P" transform="translate(2864,781) scale(24)"/>
<use href="#P" transform="translate(193,1930) scale(24)"/>
<use href="#P" transform="translate(1263,2177) scale(24)"/>
<rect x="254" y="333" width="17" height="18" fill="#fff"/><rect x="2000" y="297" width="18" height="18" fill="#fff"/><rect x="129" y="1814" width="18" height="18" fill="#fff"/><rect x="2798" y="2019" width="18" height="18" fill="#fff"/><rect x="1273" y="2277" width="18" height="18" fill="#fff"/>
<!-- left window sparkles -->
<use href="#S" transform="translate(1217,593) scale(23)"/><rect x="1278" y="571" width="8" height="8" fill="#fff"/>
<use href="#P" transform="translate(275,662) scale(12)"/><use href="#S" transform="translate(262,714) scale(17)"/>
<use href="#P" transform="translate(1362,1226) scale(12)"/><use href="#S" transform="translate(708,1701) scale(28)"/>
<g opacity=".3"><use href="#P" transform="translate(738,1678) scale(10)"/></g>
<use href="#P" transform="translate(383,1747) scale(12)"/><use href="#P" transform="translate(1224,1697) scale(12)"/>
<rect x="1159" y="1660" width="8" height="12" fill="#fff"/><rect x="729" y="1821" width="8" height="12" fill="#fff"/><rect x="523" y="1719" width="6" height="10" fill="#a9a2cc"/>
<!-- right window sparkles -->
<use href="#S" transform="translate(1666,568) scale(28)"/><use href="#P" transform="translate(1760,612) scale(12)"/>
<use href="#S" transform="translate(2514,725) scale(22)"/><rect x="2462" y="738" width="8" height="8" fill="#fff"/>
<use href="#S" transform="translate(2638,1068) scale(28)"/><use href="#P" transform="translate(2114,1048) scale(12)"/><rect x="1615" y="1029" width="8" height="8" fill="#fff"/>
<use href="#P" transform="translate(2208,1282) scale(12)"/><use href="#S" transform="translate(1567,1378) scale(13)"/><use href="#P" transform="translate(2011,1427) scale(12)"/><use href="#S" transform="translate(2045,1450) scale(15)"/>
<rect x="1599" y="1419" width="8" height="8" fill="#fff"/><rect x="2016" y="1498" width="8" height="8" fill="#fff"/>
<use href="#S" transform="translate(2503,1708) scale(20)"/><use href="#P" transform="translate(2420,1781) scale(12)"/><rect x="2177" y="1752" width="8" height="8" fill="#fff"/>
</svg>
</body></html>
